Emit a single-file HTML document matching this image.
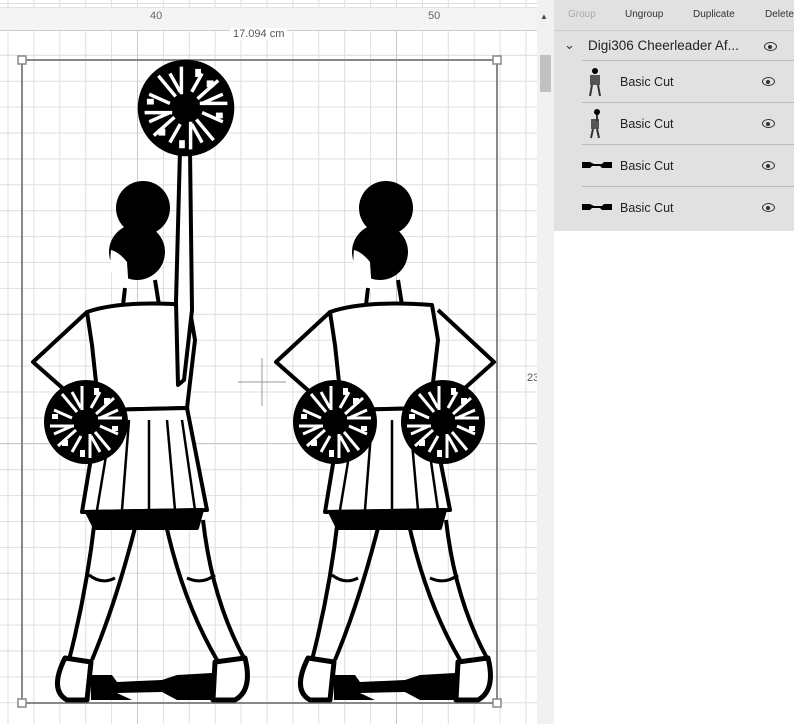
<!DOCTYPE html>
<html><head><meta charset="utf-8"><style>
body{margin:0;width:794px;height:724px;overflow:hidden;background:#fff;font-family:"Liberation Sans",sans-serif;position:relative}
.ruler{position:absolute;left:0;top:7px;width:537px;height:22px;background:#f4f4f4;border-bottom:1px solid #ccc;border-top:1px solid #e2e2e2}
.ruler span{position:absolute;top:2px;font-size:11px;color:#666}
.sb{position:absolute;left:537px;top:0;width:17px;height:724px;background:#f1f1f1}
.thumb{position:absolute;left:540px;top:55px;width:11px;height:37px;background:#c1c1c1}
.panel{position:absolute;left:554px;top:0;width:240px;height:231px;background:#e1e1e1}
.tb{position:absolute;top:9px;font-size:10px;color:#333}
.row{position:absolute;left:28px;width:212px;height:41px;border-top:1px solid #bbb;font-size:12.5px;color:#222}
.row .t{position:absolute;left:38px;top:14px}
.eye{position:absolute;left:180px;top:16px;width:11px;height:7px;border:1.5px solid #333;border-radius:50%}
.eye:after{content:"";position:absolute;left:3px;top:1.5px;width:4px;height:4px;background:#333;border-radius:50%}
</style></head><body>
<svg style="position:absolute;left:0;top:0" width="537" height="724">
<defs><pattern id="g" width="25.9" height="25.9" patternUnits="userSpaceOnUse" x="7.5" y="3">
<path d="M0.5 0V25.9M0 0.5H25.9" stroke="#dedede" stroke-width="1" fill="none"/></pattern></defs>
<rect width="537" height="724" fill="url(#g)"/>
<path d="M137.5 29V724M396.5 29V724M0 443.5H537" stroke="#c8c8c8"/>
</svg>
<div class="ruler"><span style="left:150px">40</span><span style="left:428px">50</span></div>
<div style="position:absolute;left:230px;top:28px;font-size:11px;color:#555;background:#fff;padding:0 3px">17.094 cm</div>
<div style="position:absolute;left:527px;top:372px;font-size:11px;color:#555">23</div>
<div class="sb"></div><div class="thumb"></div>
<div style="position:absolute;left:540px;top:12px;font-size:8px;color:#444">▲</div>
<div class="panel">
<div class="tb" style="left:14px;color:#aaa">Group</div>
<div class="tb" style="left:71px">Ungroup</div>
<div class="tb" style="left:139px">Duplicate</div>
<div class="tb" style="left:211px">Delete</div>
<div style="position:absolute;left:0;top:30px;width:240px;height:1px;background:#ccc"></div>
<div style="position:absolute;left:10px;top:37px;font-size:13px;color:#333">⌄</div>
<div style="position:absolute;left:34px;top:38px;font-size:13.5px;color:#222">Digi306 Cheerleader Af...</div>
<div class="eye" style="left:210px;top:42px"></div>
<div class="row" style="top:60px"><svg style="position:absolute;left:5px;top:6px" width="16" height="30"><circle cx="8" cy="4" r="3"/><rect x="3" y="8" width="10" height="10" fill="#555"/><path d="M5 18 L3 29 M11 18 L13 29" stroke="#333" stroke-width="2"/></svg><span class="t">Basic Cut</span><div class="eye"></div></div>
<div class="row" style="top:102px"><svg style="position:absolute;left:5px;top:6px" width="16" height="30"><circle cx="10" cy="3" r="3"/><rect x="4" y="10" width="8" height="10" fill="#555"/><path d="M6 20 L4 29 M10 20 L12 29 M10 6 L10 12" stroke="#333" stroke-width="2"/></svg><span class="t">Basic Cut</span><div class="eye"></div></div>
<div class="row" style="top:144px"><svg style="position:absolute;left:0;top:16px" width="30" height="8"><path d="M0 1 H8 L12 3 H20 L22 1 H30 V7 H20 L18 5 H10 L8 7 H0Z"/></svg><span class="t">Basic Cut</span><div class="eye"></div></div>
<div class="row" style="top:186px"><svg style="position:absolute;left:0;top:16px" width="30" height="8"><path d="M0 1 H8 L12 3 H20 L22 1 H30 V7 H20 L18 5 H10 L8 7 H0Z"/></svg><span class="t">Basic Cut</span><div class="eye"></div></div>
</div>
<svg style="position:absolute;left:0;top:0" width="537" height="724">
<defs>
<g id="pom">
<circle r="42" fill="#000"/>
<g stroke="#fff" stroke-width="3">
<path d="M-4-36V-12M4 36V12M-36 4H-12M36-4H12M-24-28L-9-10M24 28L9 10M-28 24L-10 8M28-24L10-8"/>
<path d="M-14-30L-5-14M14 30L5 14M-32 12L-14 4M32-12L14-4M14-30L5-14M-14 30L-5 14M-32-12L-14-4M32 12L14 4"/>
</g>
<g fill="#fff"><rect x="-34" y="-8" width="6" height="5"/><rect x="26" y="4" width="6" height="5"/><rect x="-6" y="28" width="5" height="7"/><rect x="8" y="-34" width="5" height="7"/><rect x="-24" y="18" width="6" height="6"/><rect x="18" y="-24" width="6" height="6"/></g>
<circle r="5" fill="#000"/>
</g>
<g id="body" fill="none" stroke="#000" stroke-width="4" stroke-linejoin="round">
<circle cx="386" cy="208" r="27" fill="#000" stroke="none"/>
<circle cx="380" cy="252" r="28" fill="#000" stroke="none"/>
<path d="M354 250 Q350 285 372 293 L370 262 Q362 252 354 250Z" fill="#fff" stroke="none"/>
<path d="M368 288 L366 305 M398 280 L402 305"/>
<path d="M330 312 Q365 300 432 305 L438 340 L430 408 L342 410 L335 345Z" fill="#fff"/>
<path d="M342 410 L430 408 L450 510 L325 512Z" fill="#fff"/>
<path d="M355 420 L340 510 M372 420 L365 510 M392 420 L392 510 M410 420 L418 510 M425 420 L438 510" stroke-width="2.5"/>
<path d="M330 512 L445 510 L440 528 L338 528Z" fill="#000"/>
<path d="M338 518 Q330 590 312 660 M380 520 Q360 600 335 660 M408 520 Q425 600 460 660 M446 520 Q455 600 488 660"/>
<path d="M332 575 Q345 585 358 578 M430 578 Q445 585 458 575" stroke-width="3"/>
<path d="M308 658 Q292 690 310 700 L330 700 L334 662Z" fill="#fff" stroke-width="5"/>
<path d="M458 662 L488 658 Q496 690 478 700 L456 700Z" fill="#fff" stroke-width="5"/>
<path d="M334 675 L355 675 L360 682 L405 680 L420 675 L455 673 L455 700 L420 700 L405 692 L360 693 L375 700 L334 700Z" fill="#000" stroke="none"/>
</g>
</defs>
<rect x="22" y="60" width="475" height="643" fill="none" stroke="#888" stroke-width="2"/>
<g fill="#fff" stroke="#888" stroke-width="1.5"><rect x="18" y="56" width="8" height="8"/><rect x="493" y="56" width="8" height="8"/><rect x="18" y="699" width="8" height="8"/><rect x="493" y="699" width="8" height="8"/></g>
<path d="M262 358V406M238 382H286" stroke="#999" stroke-width="1"/>
<use href="#body"/>
<path d="M330 312 L276 362 L310 392 M438 310 L494 362 L456 396" fill="none" stroke="#000" stroke-width="4" stroke-linejoin="round"/>
<use href="#pom" x="335" y="422"/>
<use href="#pom" x="443" y="422"/>
<g transform="translate(-243,0)"><use href="#body"/></g>
<path d="M87 312 L33 362 L67 392" fill="none" stroke="#000" stroke-width="4" stroke-linejoin="round"/>
<path d="M176 302 L180 150 L190 150 L192 310 L184 380 L178 385Z" fill="#fff" stroke="#000" stroke-width="4" stroke-linejoin="round"/>
<use href="#pom" x="86" y="422"/>
<g transform="translate(186 108) scale(1.15)"><use href="#pom"/></g>
</svg>
</body></html>
